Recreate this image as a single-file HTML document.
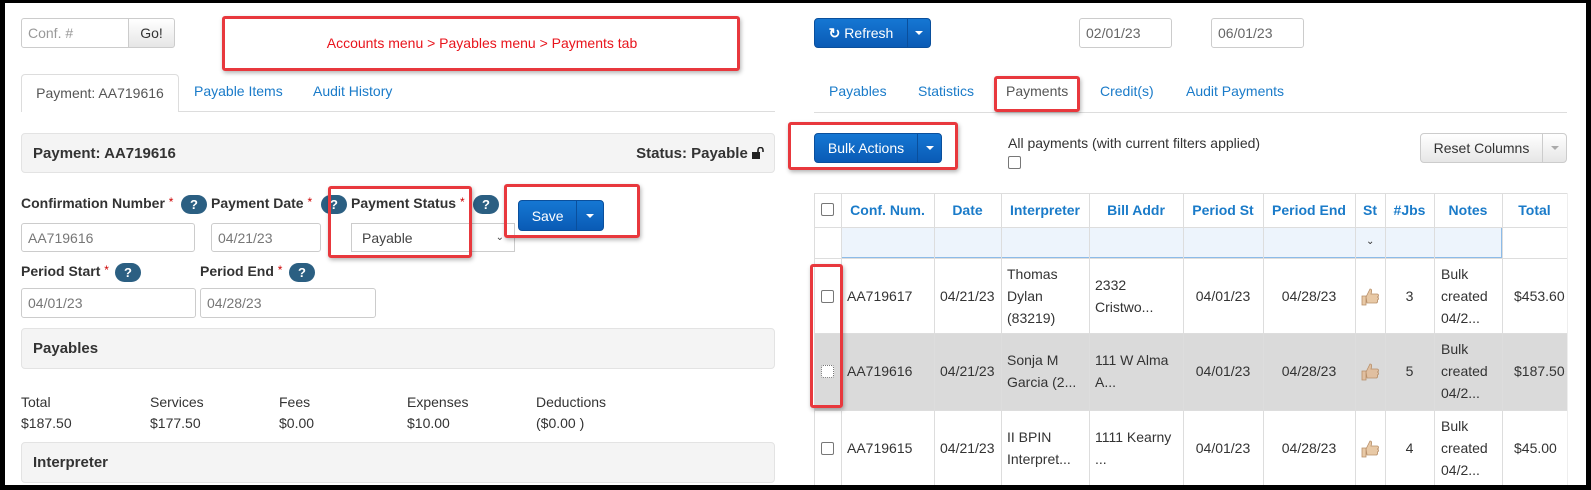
<!DOCTYPE html>
<html><head><meta charset="utf-8"><style>
*{box-sizing:border-box;margin:0;padding:0}
body{width:1591px;height:490px;background:#000;position:relative;overflow:hidden;font-family:"Liberation Sans",Arial,sans-serif;font-size:14px;color:#333}
.a{position:absolute}
#pg{position:absolute;left:5px;top:3px;width:1581px;height:482px;background:#fff}
.inp{position:absolute;border:1px solid #ccc;border-radius:3px;background:#fff;color:#777;font-size:14px;padding-left:6px;display:flex;align-items:center}
.rb{position:absolute;border:3px solid #e8383d;border-radius:3px;box-shadow:1px 2px 4px rgba(0,0,0,.3)}
.btnb{position:absolute;background:linear-gradient(#1577d3,#0a5bb5);border:1px solid #0a4f9c;border-radius:4px;color:#fff;display:flex;align-items:center;font-size:14px}
.btng{position:absolute;background:linear-gradient(#fff,#e6e6e6);border:1px solid #ccc;border-radius:4px;color:#333;display:flex;align-items:center}
.car{width:0;height:0;border-left:4px solid transparent;border-right:4px solid transparent;border-top:4px solid currentColor}
.lbl{position:absolute;font-weight:bold;font-size:14px;color:#333;white-space:nowrap}
.req{color:#c00;font-weight:normal;font-size:12px;vertical-align:top}
.q{position:absolute;width:26px;height:19px;border-radius:10px;background:#2b5f82;color:#fff;font-weight:bold;font-size:13px;text-align:center;line-height:19px}
.lnk{position:absolute;color:#1a7bc9;font-size:14px}
.panel{position:absolute;background:#f4f4f4;border:1px solid #e3e3e3;border-radius:4px;font-weight:bold;font-size:15px;padding-left:11px;display:flex;align-items:center}
.vl{position:absolute;width:1px;background:#ddd}
.hl{position:absolute;height:1px;background:#ddd}
.th{position:absolute;top:193px;height:34px;line-height:34px;color:#1a7bc9;font-weight:bold;text-align:center}
.td{position:absolute;font-size:14px;line-height:22px;color:#333}
.cb{position:absolute;width:13px;height:13px;border:1px solid #777;border-radius:2px;background:#fff}
</style></head><body>
<div id="pg"></div>

<div class="inp" style="left:21px;top:18px;width:108px;height:30px;border-radius:3px 0 0 3px;color:#999">Conf. #</div>
<div class="btng" style="left:128px;top:18px;width:47px;height:30px;border-radius:0 3px 3px 0;justify-content:center">Go!</div>
<div class="rb" style="left:222px;top:16px;width:518px;height:55px"></div>
<div class="a" style="left:224px;top:35px;width:516px;text-align:center;color:#e8141c;font-size:14px">Accounts menu &gt; Payables menu &gt; Payments tab</div>

<div class="hl" style="left:21px;top:111px;width:754px"></div>
<div class="a" style="left:21px;top:74px;width:158px;height:38px;background:#fff;border:1px solid #ddd;border-bottom:none;border-radius:4px 4px 0 0;text-align:center;line-height:36px;color:#555">Payment: AA719616</div>
<div class="lnk" style="left:194px;top:83px">Payable Items</div>
<div class="lnk" style="left:313px;top:83px">Audit History</div>

<div class="panel" style="left:21px;top:133px;width:754px;height:40px">Payment: AA719616<span style="position:absolute;right:10px">Status: Payable <svg width="12" height="12" viewBox="0 0 12 12" style="vertical-align:-1px"><rect x="0" y="5" width="8" height="7" fill="#222"/><path d="M6 5V3a2.5 2.5 0 015 0v2" stroke="#222" stroke-width="1.6" fill="none"/></svg></span></div>

<div class="lbl" style="left:21px;top:195px">Confirmation Number <span class="req">*</span></div>
<div class="q" style="left:181px;top:195px">?</div>
<div class="lbl" style="left:211px;top:195px">Payment Date <span class="req">*</span></div>
<div class="q" style="left:321px;top:195px">?</div>
<div class="lbl" style="left:351px;top:195px">Payment Status <span class="req">*</span></div>
<div class="q" style="left:473px;top:195px">?</div>
<div class="inp" style="left:21px;top:223px;width:174px;height:29px">AA719616</div>
<div class="inp" style="left:211px;top:223px;width:110px;height:29px">04/21/23</div>
<div class="inp" style="left:351px;top:223px;width:164px;height:29px;border-radius:0;color:#444;padding-left:10px">Payable<span style="position:absolute;right:10px;font-size:10px">&#8964;</span></div>
<div class="rb" style="left:328px;top:186px;width:144px;height:72px"></div>
<div class="btnb" style="left:518px;top:200px;width:86px;height:31px"><span style="width:58px;text-align:center">Save</span><span style="border-left:1px solid #0a4f9c;height:100%;width:27px;display:flex;align-items:center;justify-content:center"><span class="car"></span></span></div>
<div class="rb" style="left:504px;top:184px;width:136px;height:54px"></div>

<div class="lbl" style="left:21px;top:263px">Period Start <span class="req">*</span></div>
<div class="q" style="left:115px;top:263px">?</div>
<div class="lbl" style="left:200px;top:263px">Period End <span class="req">*</span></div>
<div class="q" style="left:289px;top:263px">?</div>
<div class="inp" style="left:21px;top:288px;width:175px;height:30px">04/01/23</div>
<div class="inp" style="left:200px;top:288px;width:176px;height:30px">04/28/23</div>

<div class="panel" style="left:21px;top:328px;width:754px;height:41px">Payables</div>
<div class="a" style="left:21px;top:392px;line-height:21px">Total<br>$187.50</div>
<div class="a" style="left:150px;top:392px;line-height:21px">Services<br>$177.50</div>
<div class="a" style="left:279px;top:392px;line-height:21px">Fees<br>$0.00</div>
<div class="a" style="left:407px;top:392px;line-height:21px">Expenses<br>$10.00</div>
<div class="a" style="left:536px;top:392px;line-height:21px">Deductions<br>($0.00 )</div>
<div class="panel" style="left:21px;top:442px;width:754px;height:41px">Interpreter</div>

<div class="btnb" style="left:814px;top:18px;width:117px;height:30px"><span style="width:92px;text-align:center"><b style="font-size:14px">&#8635;</b> Refresh</span><span style="border-left:1px solid #0a4f9c;height:100%;flex:1;display:flex;align-items:center;justify-content:center"><span class="car"></span></span></div>
<div class="inp" style="left:1079px;top:18px;width:93px;height:30px;color:#666">02/01/23</div>
<div class="inp" style="left:1211px;top:18px;width:93px;height:30px;color:#666">06/01/23</div>

<div class="hl" style="left:814px;top:112px;width:753px"></div>
<div class="lnk" style="left:829px;top:83px">Payables</div>
<div class="lnk" style="left:918px;top:83px">Statistics</div>
<div class="a" style="left:1006px;top:83px;color:#555">Payments</div>
<div class="lnk" style="left:1100px;top:83px">Credit(s)</div>
<div class="lnk" style="left:1186px;top:83px">Audit Payments</div>
<div class="rb" style="left:994px;top:76px;width:86px;height:36px"></div>

<div class="btnb" style="left:814px;top:133px;width:128px;height:30px"><span style="width:102px;text-align:center">Bulk Actions</span><span style="border-left:1px solid #0a4f9c;height:100%;flex:1;display:flex;align-items:center;justify-content:center"><span class="car"></span></span></div>
<div class="rb" style="left:788px;top:122px;width:170px;height:48px"></div>
<div class="a" style="left:1008px;top:135px">All payments (with current filters applied)</div>
<div class="cb" style="left:1008px;top:156px"></div>
<div class="btng" style="left:1420px;top:133px;width:147px;height:30px"><span style="width:121px;text-align:center">Reset Columns</span><span style="border-left:1px solid #ccc;height:100%;flex:1;display:flex;align-items:center;justify-content:center;color:#aaa"><span class="car"></span></span></div>

<div class="a" style="left:841px;top:227px;width:661px;height:31px;background:#edf4fc"></div>
<div class="a" style="left:841px;top:227px;width:661px;height:31px;border:1px solid #8cbbe8"></div>
<div class="a" style="left:814px;top:333px;width:753px;height:77px;background:#dadada"></div>
<div class="hl" style="left:814px;top:193px;width:753px"></div>
<div class="hl" style="left:814px;top:227px;width:753px"></div>
<div class="hl" style="left:814px;top:258px;width:753px"></div>
<div class="hl" style="left:814px;top:333px;width:753px"></div>
<div class="hl" style="left:814px;top:410px;width:753px"></div>
<div class="vl" style="left:814px;top:193px;height:292px"></div>
<div class="vl" style="left:841px;top:193px;height:292px"></div>
<div class="vl" style="left:934px;top:193px;height:292px"></div>
<div class="vl" style="left:1001px;top:193px;height:292px"></div>
<div class="vl" style="left:1089px;top:193px;height:292px"></div>
<div class="vl" style="left:1183px;top:193px;height:292px"></div>
<div class="vl" style="left:1263px;top:193px;height:292px"></div>
<div class="vl" style="left:1355px;top:193px;height:292px"></div>
<div class="vl" style="left:1385px;top:193px;height:292px"></div>
<div class="vl" style="left:1434px;top:193px;height:292px"></div>
<div class="vl" style="left:1502px;top:193px;height:292px"></div>
<div class="vl" style="left:1567px;top:193px;height:292px;background:#eee"></div>
<div class="a" style="left:1366px;top:236px;font-size:10px;color:#333">&#8964;</div>

<div class="cb" style="left:821px;top:203px"></div>
<div class="th" style="left:841px;width:93px">Conf. Num.</div>
<div class="th" style="left:934px;width:67px">Date</div>
<div class="th" style="left:1001px;width:88px">Interpreter</div>
<div class="th" style="left:1089px;width:94px">Bill Addr</div>
<div class="th" style="left:1183px;width:80px">Period St</div>
<div class="th" style="left:1263px;width:92px">Period End</div>
<div class="th" style="left:1355px;width:30px">St</div>
<div class="th" style="left:1385px;width:49px">#Jbs</div>
<div class="th" style="left:1434px;width:68px">Notes</div>
<div class="th" style="left:1502px;width:65px">Total</div>

<div class="cb" style="left:821px;top:290px"></div>
<div class="td" style="left:847px;top:285px">AA719617</div>
<div class="td" style="left:940px;top:285px">04/21/23</div>
<div class="td" style="left:1007px;top:263px">Thomas<br>Dylan<br>(83219)</div>
<div class="td" style="left:1095px;top:274px">2332<br>Cristwo...</div>
<div class="td" style="left:1183px;width:80px;text-align:center;top:285px">04/01/23</div>
<div class="td" style="left:1263px;width:92px;text-align:center;top:285px">04/28/23</div>
<div class="td" style="left:1385px;width:49px;text-align:center;top:285px">3</div>
<div class="td" style="left:1441px;top:263px">Bulk<br>created<br>04/2...</div>
<div class="td" style="left:1514px;top:285px;white-space:nowrap;width:53px;overflow:hidden">$453.60</div>

<div class="cb" style="left:821px;top:365px;border-style:dotted"></div>
<div class="td" style="left:847px;top:360px">AA719616</div>
<div class="td" style="left:940px;top:360px">04/21/23</div>
<div class="td" style="left:1007px;top:349px">Sonja M<br>Garcia (2...</div>
<div class="td" style="left:1095px;top:349px">111 W Alma<br>A...</div>
<div class="td" style="left:1183px;width:80px;text-align:center;top:360px">04/01/23</div>
<div class="td" style="left:1263px;width:92px;text-align:center;top:360px">04/28/23</div>
<div class="td" style="left:1385px;width:49px;text-align:center;top:360px">5</div>
<div class="td" style="left:1441px;top:338px">Bulk<br>created<br>04/2...</div>
<div class="td" style="left:1514px;top:360px;white-space:nowrap;width:53px;overflow:hidden">$187.50</div>

<div class="cb" style="left:821px;top:442px"></div>
<div class="td" style="left:847px;top:437px">AA719615</div>
<div class="td" style="left:940px;top:437px">04/21/23</div>
<div class="td" style="left:1007px;top:426px">II BPIN<br>Interpret...</div>
<div class="td" style="left:1095px;top:426px">1111 Kearny<br>...</div>
<div class="td" style="left:1183px;width:80px;text-align:center;top:437px">04/01/23</div>
<div class="td" style="left:1263px;width:92px;text-align:center;top:437px">04/28/23</div>
<div class="td" style="left:1385px;width:49px;text-align:center;top:437px">4</div>
<div class="td" style="left:1441px;top:415px">Bulk<br>created<br>04/2...</div>
<div class="td" style="left:1514px;top:437px;white-space:nowrap;width:53px;overflow:hidden">$45.00</div>

<svg class="a" style="left:1360px;top:287px" width="20" height="20" viewBox="0 0 20 20"><path d="M2 9h4v9H2zM6 10l4-8c2 0 2 2 1 5h6c2 0 2 3 0 3 2 0 2 3 0 3 1 0 1 3-1 3H7z" fill="#e8c9a6" stroke="#b8906a" stroke-width=".8"/></svg>
<svg class="a" style="left:1360px;top:362px" width="20" height="20" viewBox="0 0 20 20"><path d="M2 9h4v9H2zM6 10l4-8c2 0 2 2 1 5h6c2 0 2 3 0 3 2 0 2 3 0 3 1 0 1 3-1 3H7z" fill="#e0bfa0" stroke="#b8906a" stroke-width=".8"/></svg>
<svg class="a" style="left:1360px;top:439px" width="20" height="20" viewBox="0 0 20 20"><path d="M2 9h4v9H2zM6 10l4-8c2 0 2 2 1 5h6c2 0 2 3 0 3 2 0 2 3 0 3 1 0 1 3-1 3H7z" fill="#e8c9a6" stroke="#b8906a" stroke-width=".8"/></svg>

<div class="rb" style="left:810px;top:264px;width:33px;height:144px"></div>
</body></html>
